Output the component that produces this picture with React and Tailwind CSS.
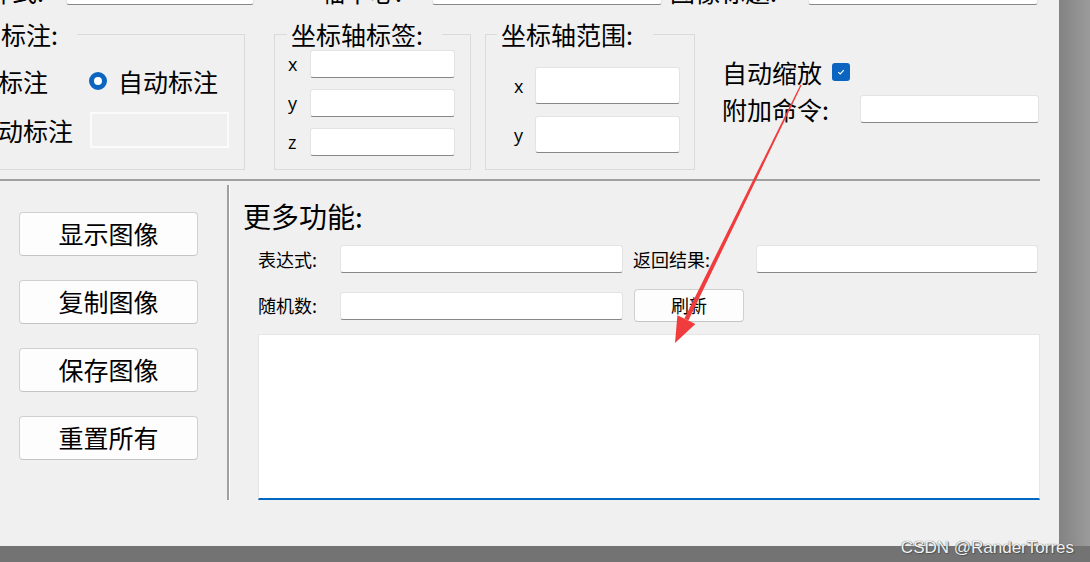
import React from 'react'

function Field({ className = '' }) {
  return <div className={`bg-white border border-[#e3e3e3] border-b-[#878787] rounded-[3px] shrink-0 ${className}`} />
}

function Button({ children, className = '' }) {
  return (
    <button className={`bg-[#fdfdfd] border border-[#d0d0d0] border-b-[#c4c4c4] rounded-[4px] text-black flex items-center justify-center shrink-0 ${className}`}>
      {children}
    </button>
  )
}

function Radio({ checked }) {
  return checked ? (
    <span className="block w-[18px] h-[18px] rounded-full border-[5px] border-[#0a64c0] bg-white shrink-0" />
  ) : (
    <span className="block w-[18px] h-[18px] rounded-full border border-[#8a8a8a] bg-[#f7f7f7] shrink-0" />
  )
}

function Group({ title, className = '', legendClass = '', children }) {
  return (
    <fieldset className={`border border-[#dadada] h-[151px] shrink-0 ${className}`}>
      <legend className={`text-[25px] leading-[30px] whitespace-nowrap ${legendClass}`}>{title}</legend>
      {children}
    </fieldset>
  )
}

function AxisRow({ label, labelClass, inputClass }) {
  return (
    <div className="flex items-center">
      <span className={`font-['Open_Sans','Noto_Sans_CJK_SC',sans-serif] text-[18px] leading-none ${labelClass}`}>{label}</span>
      <Field className={inputClass} />
    </div>
  )
}

export default function App() {
  return (
    <div className="relative w-[1090px] h-[562px] overflow-hidden bg-[#737373] font-['Noto_Sans_CJK_SC',sans-serif] text-black">
      <div className="flex h-[546px]">
        <div className="w-[1059px] h-full bg-[#f0f0f0] overflow-hidden flex flex-col">
          {/* top row, mostly scrolled off */}
          <div className="-mt-[23px] h-[28px] flex items-center text-[25px] leading-[28px] whitespace-nowrap shrink-0">
            <span className="-ml-[80px] w-[124px] text-right shrink-0">图像样式:</span>
            <Field className="ml-[22px] w-[188px] h-[28px]" />
            <span className="ml-[66px] w-[112px] shrink-0">轴中心:</span>
            <Field className="w-[230px] h-[28px]" />
            <span className="ml-[8px] w-[138px] shrink-0">图像标题:</span>
            <Field className="w-[230px] h-[28px]" />
          </div>

          {/* group boxes */}
          <div className="flex items-start mt-[14px] shrink-0">
            <Group title="标注:" className="-ml-[120px] w-[365px]" legendClass="ml-[117px] pl-[3px] pr-[19px]">
              <div className="flex items-center mt-[17px] h-[30px] text-[25px] leading-[30px] whitespace-nowrap">
                <span className="ml-[38px]"><Radio /></span>
                <span className="ml-[11px]">手动标注</span>
                <span className="ml-[41px]"><Radio checked /></span>
                <span className="ml-[11px]">自动标注</span>
              </div>
              <div className="flex items-center mt-[16px] h-[36px] text-[25px] leading-[30px] whitespace-nowrap">
                <span className="ml-[92px] w-[100px] shrink-0">手动标注</span>
                <div className="ml-[17px] w-[139px] h-[36px] border-2 border-[#fbfbfb] bg-[#f0f0f0] shrink-0" />
              </div>
            </Group>

            <Group title="坐标轴标签:" className="ml-[29px] w-[197px]" legendClass="ml-[12px] pl-[4px] pr-[19px]">
              <div className="flex flex-col gap-[11px] mt-[1px]">
                <AxisRow label="x" labelClass="ml-[13px] w-[22px]" inputClass="w-[145px] h-[28px]" />
                <AxisRow label="y" labelClass="ml-[13px] w-[22px]" inputClass="w-[145px] h-[28px]" />
                <AxisRow label="z" labelClass="ml-[13px] w-[22px]" inputClass="w-[145px] h-[28px]" />
              </div>
            </Group>

            <Group title="坐标轴范围:" className="ml-[14px] w-[210px]" legendClass="ml-[11px] pl-[4px] pr-[20px]">
              <div className="flex flex-col gap-[12px] mt-[18px]">
                <AxisRow label="x" labelClass="ml-[28px] w-[21px]" inputClass="w-[145px] h-[37px]" />
                <AxisRow label="y" labelClass="ml-[28px] w-[21px]" inputClass="w-[145px] h-[37px]" />
              </div>
            </Group>

            <div className="ml-[27px] mt-[38px] flex flex-col text-[25px] leading-[30px] whitespace-nowrap">
              <div className="flex items-center h-[30px]">
                <span>自动缩放</span>
                <span className="ml-[10px] w-[18px] h-[18px] rounded-[3px] bg-[#0a64c0] flex items-center justify-center">
                  <svg width="10" height="10" viewBox="0 0 10 10">
                    <path d="M2.2 5.2 L4.2 7 L7.8 3.2" fill="none" stroke="white" strokeWidth="1.1" />
                  </svg>
                </span>
              </div>
              <div className="flex items-center h-[28px] mt-[8px]">
                <span className="w-[138px] shrink-0">附加命令:</span>
                <Field className="w-[179px] h-[28px]" />
              </div>
            </div>
          </div>

          <div className="mt-[9px] h-[2px] w-[1040px] bg-[#a0a0a0] shrink-0" />

          {/* lower area */}
          <div className="flex">
            <div className="w-[227px] pt-[31px] pl-[19px] flex flex-col gap-[24px] text-[25px] shrink-0">
              <Button className="w-[179px] h-[44px]">显示图像</Button>
              <Button className="w-[179px] h-[44px]">复制图像</Button>
              <Button className="w-[179px] h-[44px]">保存图像</Button>
              <Button className="w-[179px] h-[44px]">重置所有</Button>
            </div>
            <div className="mt-[4px] h-[315px] w-[3px] border-l-2 border-l-[#a0a0a0] border-r border-r-white shrink-0" />
            <div className="flex flex-col pt-[17px]">
              <div className="ml-[13px] text-[28px] leading-[36px]">更多功能:</div>
              <div className="ml-[28px] mt-[11px] flex items-center h-[28px] text-[18px] whitespace-nowrap">
                <span className="w-[82px] shrink-0">表达式:</span>
                <Field className="w-[283px] h-[28px]" />
                <span className="ml-[10px] w-[123px] shrink-0">返回结果:</span>
                <Field className="w-[282px] h-[28px]" />
              </div>
              <div className="ml-[28px] mt-[16px] flex items-center h-[33px] text-[18px] whitespace-nowrap">
                <span className="w-[82px] shrink-0">随机数:</span>
                <Field className="w-[283px] h-[28px]" />
                <Button className="ml-[11px] w-[110px] h-[33px] text-[18px]">刷新</Button>
              </div>
              <div className="ml-[28px] mt-[12px] w-[782px] h-[166px] bg-white border border-[#e6e6e6] border-b-2 border-b-[#0067c0]" />
            </div>
          </div>
        </div>
        <div className="flex-1 bg-gradient-to-r from-[#838383] to-[#9b9b9b]" />
      </div>

      {/* red annotation arrow */}
      <svg className="absolute inset-0 pointer-events-none" width="1090" height="562" viewBox="0 0 1090 562">
        <polygon points="801.6,85.3 800.4,84.7 684.4,318.6 688.4,320.6" fill="#f03c3c" />
        <polygon points="675,343 677.4,315.2 695.4,324" fill="#f03c3c" />
      </svg>

      <div className="absolute right-[16px] bottom-[6px] font-['Liberation_Sans',Arial,sans-serif] text-[17px] leading-none text-[#f4f4f4] whitespace-nowrap [text-shadow:0_0_1px_#3a3a3a,1px_1px_1px_#555]">
        CSDN @RanderTorres
      </div>
    </div>
  )
}
